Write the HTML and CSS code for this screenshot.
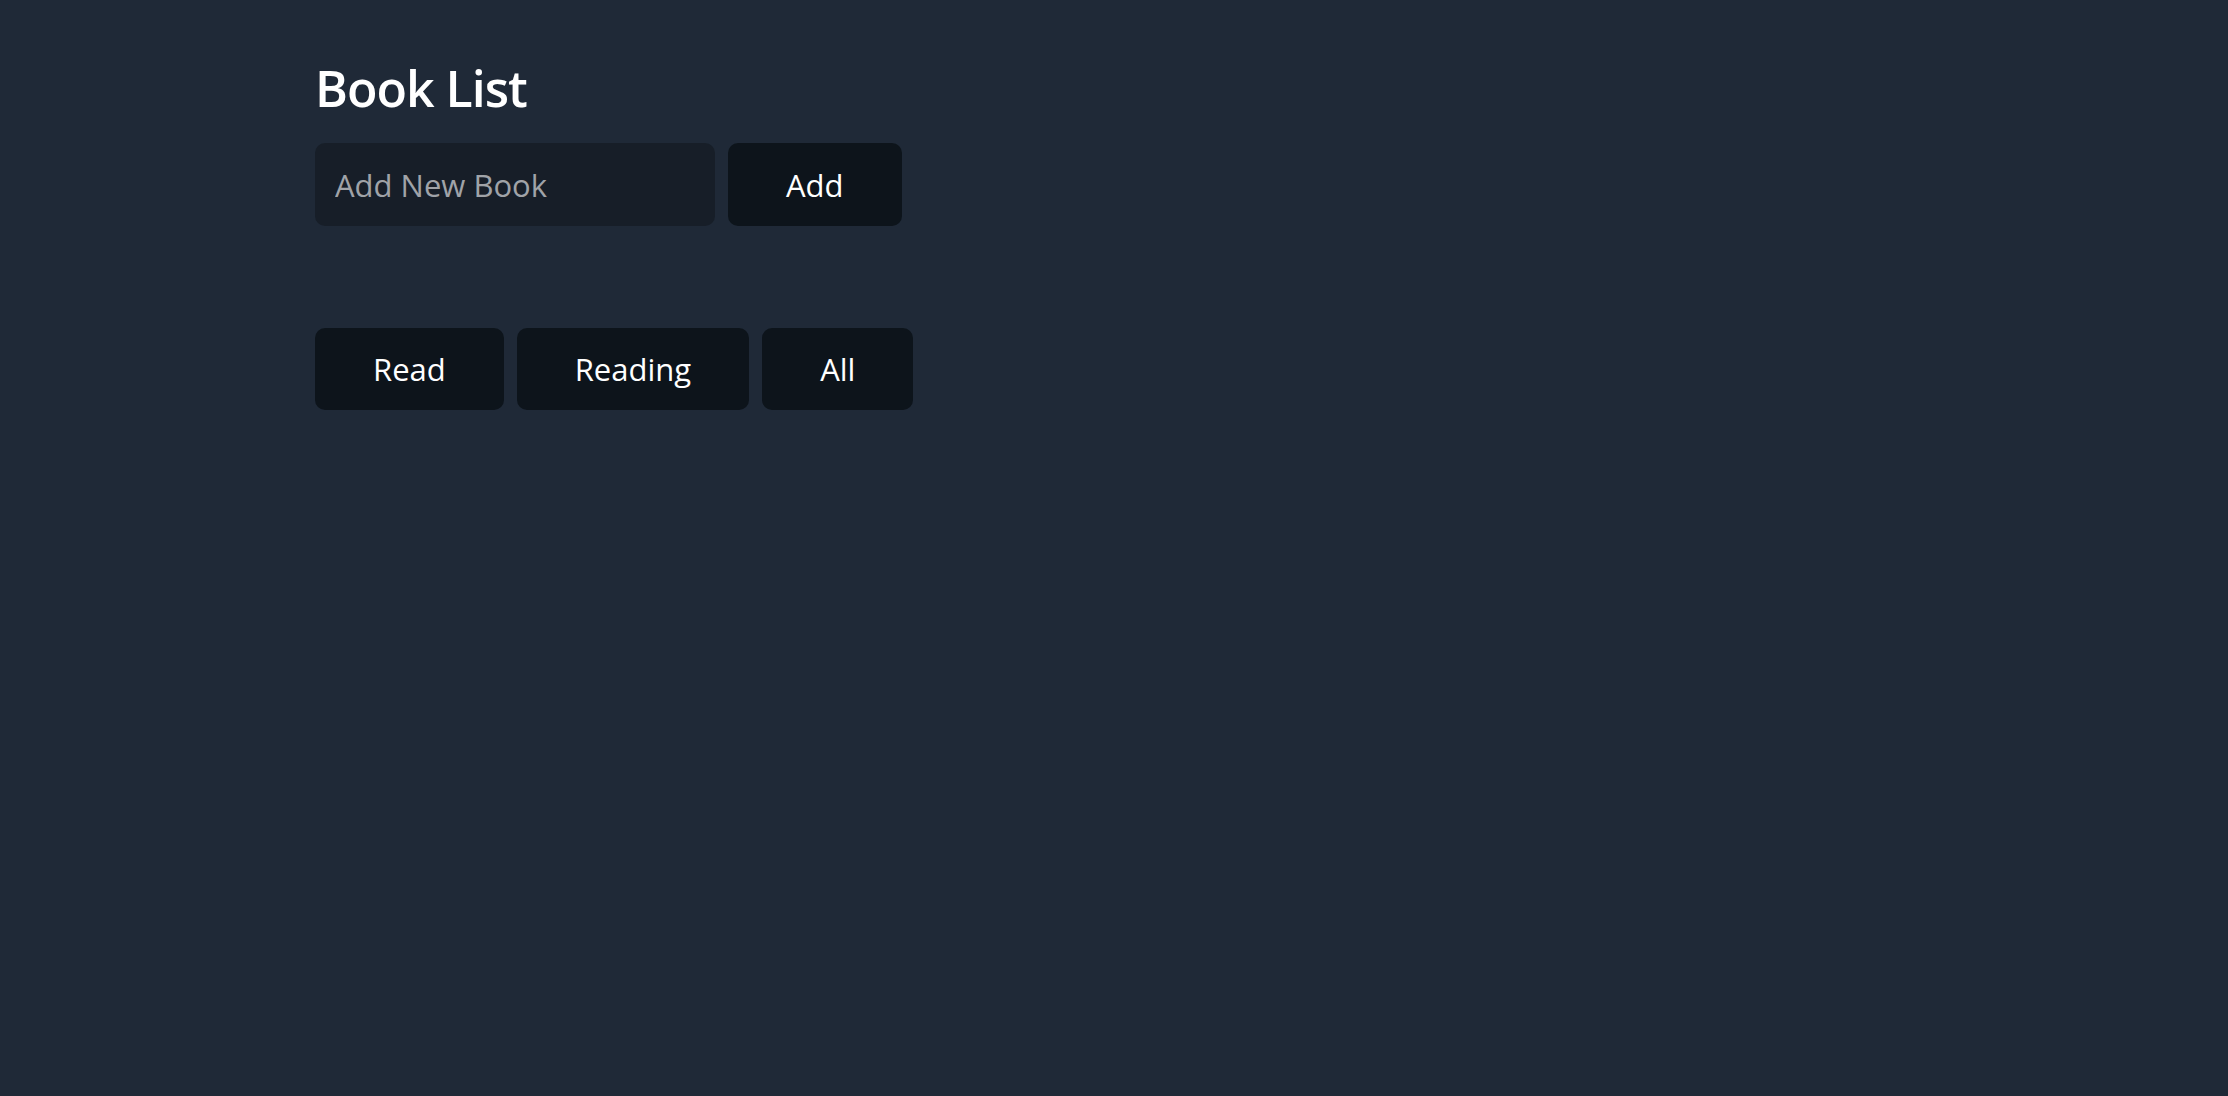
FILE: index.html
```html
<!DOCTYPE html>
<html>
<head>
    <title>Book List</title>
    <link rel="stylesheet" href="styles.css">
</head>
<body>
    <div class="container">
        <h1>Book List</h1>

        <div class="add-row">
            <input type="text" class="book-input" placeholder="Add New Book">
            <button class="btn">Add</button>
        </div>

        <ul class="book-list"></ul>

        <div class="filters">
            <button class="btn">Read</button>
            <button class="btn">Reading</button>
            <button class="btn">All</button>
        </div>
    </div>
</body>
</html>
```

FILE: styles.css
```css
html, body {
    margin: 0;
    padding: 0;
    height: 100%;
}
body {
    background-color: #1f2937;
    color: #ffffff;
    font-family: "Open Sans", "Noto Sans", Arial, sans-serif;
}
.container {
    width: 1598px;
    margin: 0 auto;
    padding-top: 46px;
}
h1 {
    margin: 0 0 14px 0;
    font-size: 50px;
    font-weight: 600;
    line-height: 80px;
    height: 83px;
    letter-spacing: -1px;
    display: flex;
    align-items: center;
}
.add-row {
    display: flex;
    gap: 13px;
}
.book-input {
    width: 400px;
    height: 83px;
    box-sizing: border-box;
    padding: 0 20px;
    border: none;
    border-radius: 10px;
    background-color: #171e28;
    color: #ffffff;
    font-family: inherit;
    font-size: 31px;
    outline: none;
}
.book-input::placeholder {
    color: #a0a3a8;
}
.btn {
    height: 83px;
    padding: 0 58px;
    border: none;
    border-radius: 10px;
    background-color: #0d141b;
    color: #ffffff;
    font-family: inherit;
    font-size: 31px;
    cursor: pointer;
}
.book-list {
    list-style: none;
    margin: 0;
    padding: 0;
    height: 102px;
}
.filters {
    display: flex;
    gap: 13px;
}
.filters .btn {
    height: 82px;
}
```
